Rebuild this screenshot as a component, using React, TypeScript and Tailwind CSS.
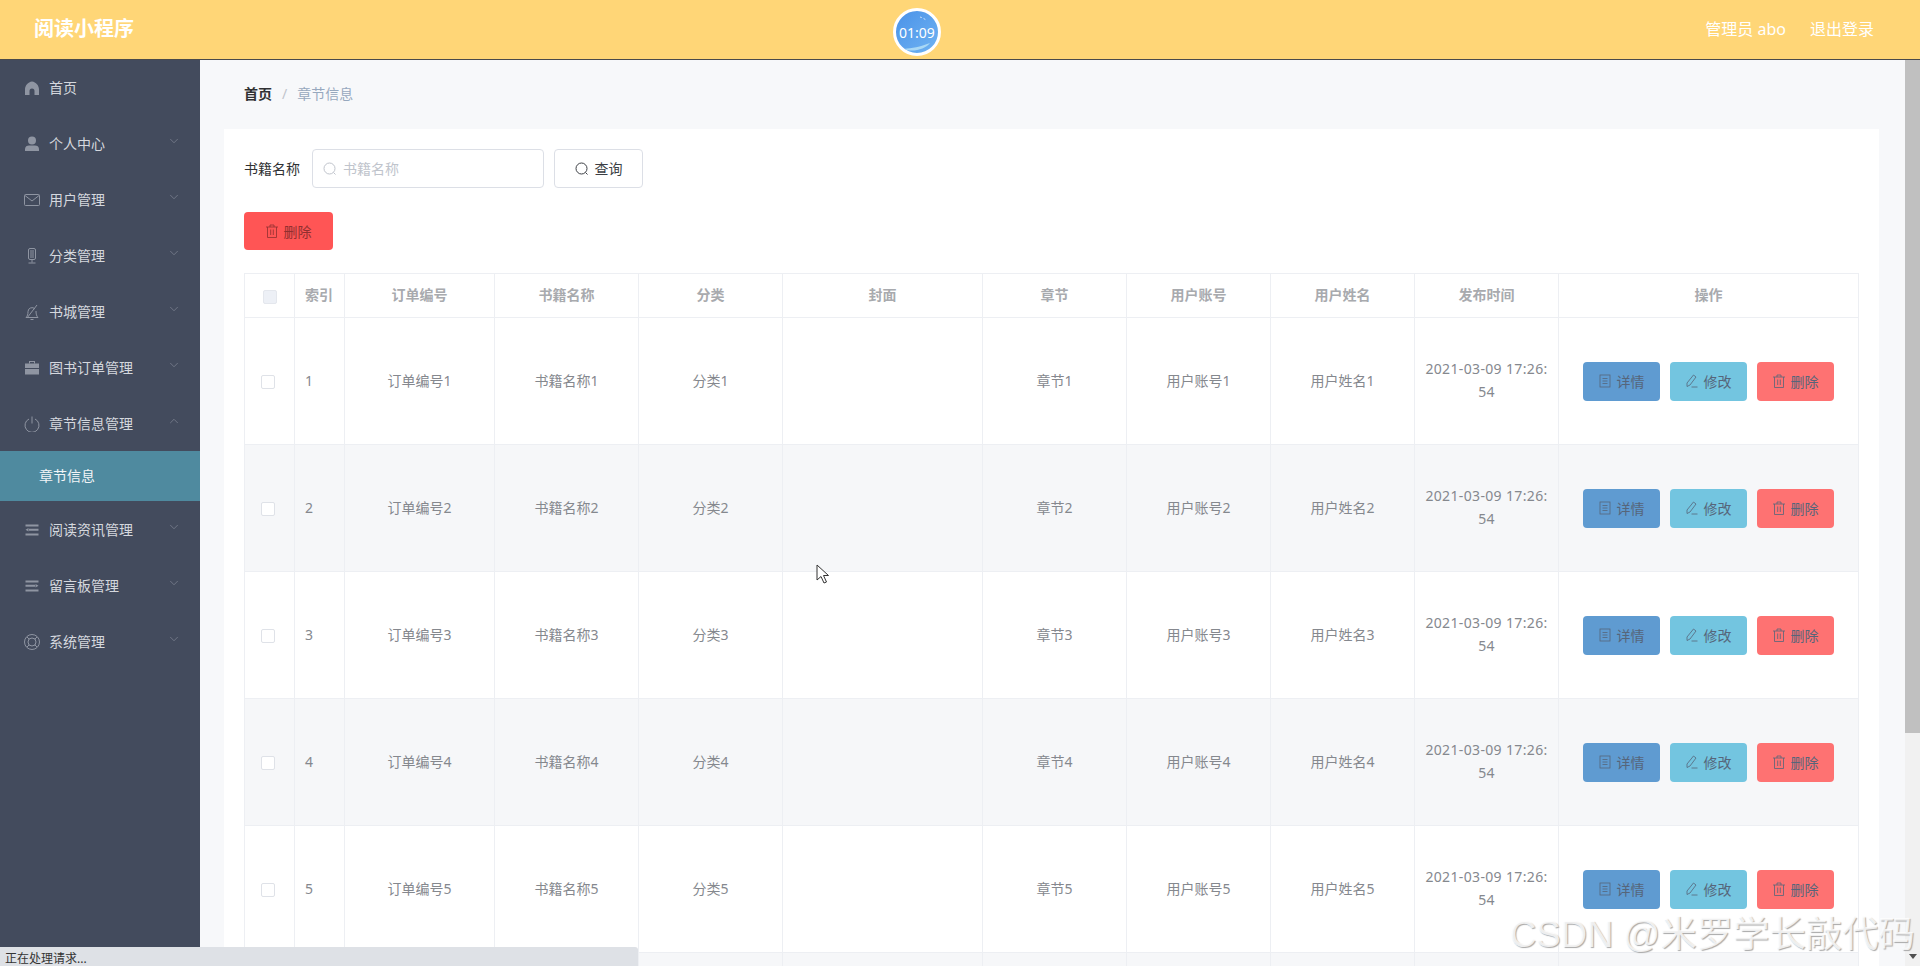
import React from "react";
import { ChevronDown, ChevronUp } from "lucide-react";

const FONT = '"Noto Sans", "Noto Sans CJK SC", sans-serif';

const HomeIcon = () => (
  <svg width="16" height="16" viewBox="0 0 16 16" fill="currentColor">
    <path d="M8 1.5C4 2 1 5.5 1 9.5V15h4.5v-4a2.5 2.5 0 0 1 5 0v4H15V9.5C15 5.500 12 2 8 1.500Z" />
  </svg>
);
const UserIcon = () => (
  <svg width="16" height="16" viewBox="0 0 16 16" fill="currentColor">
    <circle cx="8" cy="4.500" r="4" />
    <path d="M1 15v-2c0-2.500 2-3.500 4-3.500h6c2 0 4 1 4 3.500v2Z" />
  </svg>
);
const MailIcon = () => (
  <svg width="16" height="16" viewBox="0 0 16 16" fill="none" stroke="currentColor" strokeWidth="1">
    <rect x="0.500" y="2.500" width="15" height="11" rx="1" />
    <path d="M1 3.500 8 9l7-5.500" />
  </svg>
);
const MicIcon = () => (
  <svg width="16" height="16" viewBox="0 0 16 16" fill="none" stroke="currentColor" strokeWidth="1">
    <rect x="4.500" y="0.500" width="7" height="11" rx="1.500" />
    <path d="M6 3h4M6 5h4M6 7h4M6 9h4M8 11.500v3M4.500 15h7" />
  </svg>
);
const BellOffIcon = () => (
  <svg width="16" height="16" viewBox="0 0 16 16" fill="none" stroke="currentColor" strokeWidth="1">
    <path d="M2 13.500c1.500-1.500 2-3 2-6a4 4 0 0 1 7-2.500M12 7c0 3 .5 5 2 6.500H2M6.500 15.500h3M13 1 3 14" />
  </svg>
);
const CaseIcon = () => (
  <svg width="16" height="16" viewBox="0 0 16 16" fill="currentColor">
    <path d="M5 3.500V1h6v2.500h-1V2H6v1.500Z" />
    <path d="M1 3.500h14V8H1ZM1 9h14v5.500H1Z" />
  </svg>
);
const PowerIcon = () => (
  <svg width="16" height="16" viewBox="0 0 16 16" fill="none" stroke="currentColor" strokeWidth="1">
    <path d="M5 3a7 7 0 1 0 6 0M8 .5v7" />
  </svg>
);
const FoldIcon = () => (
  <svg width="16" height="16" viewBox="0 0 16 16" fill="currentColor">
    <path d="M1.500 2.500h13V4.500h-13ZM5 6.800h9.500v2H5ZM1.500 11.500h13v2h-13ZM1.500 7.800 4.500 6v3.500Z" />
  </svg>
);
const UnfoldIcon = () => (
  <svg width="16" height="16" viewBox="0 0 16 16" fill="currentColor">
    <path d="M1.500 2.500h13V4.500h-13ZM1.500 6.800H11v2H1.500ZM1.500 11.500h13v2h-13ZM14.500 7.800 11.500 6v3.500Z" />
  </svg>
);
const HelpIcon = () => (
  <svg width="16" height="16" viewBox="0 0 16 16" fill="none" stroke="currentColor" strokeWidth="1">
    <circle cx="8" cy="8" r="7.500" />
    <circle cx="8" cy="8" r="4" />
    <path d="M3 3l2.200 2.200M13 3l-2.200 2.200M3 13l2.200-2.200M13 13l-2.200-2.200" />
  </svg>
);
const SearchIcon = () => (
  <svg width="14" height="14" viewBox="0 0 14 14" fill="none" stroke="currentColor" strokeWidth="1">
    <circle cx="6.500" cy="6.500" r="5.500" />
    <path d="m10.500 10.500 2 2" />
  </svg>
);
const TrashIcon = () => (
  <svg width="12" height="14" viewBox="0 0 12 14" fill="none" stroke="currentColor" strokeWidth="0.8">
    <path d="M0 3h12M4 3V1h4v2M1.500 3v10.500h9V3M4.700 5.500v5.500M7.300 5.500v5.500" />
  </svg>
);
const EditIcon = () => (
  <svg width="12" height="14" viewBox="0 0 12 14" fill="none" stroke="currentColor" strokeWidth="0.8">
    <path d="M7.500 1 10 3 4 11l-3 1.500L1 9ZM5.500 13h6" />
  </svg>
);
const DocIcon = () => (
  <svg width="12" height="14" viewBox="0 0 12 14" fill="none" stroke="currentColor" strokeWidth="0.8">
    <rect x="1" y="1" width="10" height="12" />
    <path d="M3.500 4.500h5M3.500 7h5M3.500 9.500h5" />
  </svg>
);

const menus = [
  { label: "首页", icon: <HomeIcon />, arrow: false },
  { label: "个人中心", icon: <UserIcon />, arrow: true },
  { label: "用户管理", icon: <MailIcon />, arrow: true },
  { label: "分类管理", icon: <MicIcon />, arrow: true },
  { label: "书城管理", icon: <BellOffIcon />, arrow: true },
  { label: "图书订单管理", icon: <CaseIcon />, arrow: true },
  { label: "章节信息管理", icon: <PowerIcon />, arrow: true, open: true },
  { label: "阅读资讯管理", icon: <FoldIcon />, arrow: true },
  { label: "留言板管理", icon: <UnfoldIcon />, arrow: true },
  { label: "系统管理", icon: <HelpIcon />, arrow: true },
];

const columns = [
  { label: "索引", width: "w-[50px]", align: "text-left" },
  { label: "订单编号", width: "w-[150px]", align: "text-center" },
  { label: "书籍名称", width: "w-[144px]", align: "text-center" },
  { label: "分类", width: "w-[144px]", align: "text-center" },
  { label: "封面", width: "w-[200px]", align: "text-center" },
  { label: "章节", width: "w-[144px]", align: "text-center" },
  { label: "用户账号", width: "w-[144px]", align: "text-center" },
  { label: "用户姓名", width: "w-[144px]", align: "text-center" },
  { label: "发布时间", width: "w-[144px]", align: "text-center" },
  { label: "操作", width: "w-[300px]", align: "text-center" },
];

const rows = [1, 2, 3, 4, 5];
const cell = "border border-[#edeff3] pb-[2px] text-center";

const Sidebar = () => (
  <aside className="w-[200px] shrink-0 bg-[#434b5d] text-[14px]">
    {menus.map((menu) => (
      <div key={menu.label}>
        <div className="h-14 flex items-center pl-[24px] pr-[19px] text-[#d5d8de]">
          <span className="w-[16px] mr-[9px] text-[#8f95a2] flex justify-center">{menu.icon}</span>
          <span className="flex-1 pb-[2px]">{menu.label}</span>
          {menu.arrow &&
            (menu.open ? (
              <ChevronUp size={14} strokeWidth={1} className="text-[#8f95a2] mb-[6px]" />
            ) : (
              <ChevronDown size={14} strokeWidth={1} className="text-[#8f95a2] mb-[6px]" />
            ))}
        </div>
        {menu.open && (
          <div className="-mt-px mb-px h-[50px] flex items-center pl-[39px] pb-[2px] bg-[#4f8a9f] text-[#f2f5f7]">章节信息</div>
        )}
      </div>
    ))}
  </aside>
);

const RowButton = ({ bg, icon, text }: { bg: string; icon: React.ReactNode; text: string }) => (
  <button className={`${bg} w-[77px] h-[39px] rounded-[4px] flex items-center justify-center gap-[6px] text-[14px] text-[#56657a]`}>
    {icon}
    {text}
  </button>
);

const Table = () => (
  <table className="table-fixed w-[1614px] border-collapse border border-[#edeff3] text-[14px] text-[#85888e]">
    <thead>
      <tr className="h-[44px]">
        <th className="w-[50px] border border-[#edeff3] text-center align-middle">
          <span className="inline-block w-[14px] h-[14px] rounded-[2px] border border-[#e4e7ed] bg-[#edf0f6] align-middle" />
        </th>
        {columns.map((col) => (
          <th
            key={col.label}
            className={`${col.width} ${col.align} border border-[#edeff3] px-[10px] pb-[2px] font-bold text-[#a8aaae]`}
          >
            {col.label}
          </th>
        ))}
      </tr>
    </thead>
    <tbody>
      {rows.map((n) => (
        <tr key={n} className={n % 2 === 0 ? "h-[127px] bg-[#f6f7f9]" : "h-[127px] bg-white"}>
          <td className="border border-[#edeff3] pr-[4px] pb-[2px] text-center">
            <span className="inline-block w-[14px] h-[14px] rounded-[2px] border border-[#dfe2e8] bg-white align-middle" />
          </td>
          <td className="border border-[#edeff3] px-[10px] pb-[2px]">{n}</td>
          <td className={cell}>订单编号{n}</td>
          <td className={cell}>书籍名称{n}</td>
          <td className={cell}>分类{n}</td>
          <td className="border border-[#edeff3]" />
          <td className={cell}>章节{n}</td>
          <td className={cell}>用户账号{n}</td>
          <td className={cell}>用户姓名{n}</td>
          <td className={`${cell} leading-[23px] tracking-[0.35px]`}>
            2021-03-09 17:26:
            <br />
            54
          </td>
          <td className="border border-[#edeff3]">
            <div className="flex justify-center gap-[10px]">
              <RowButton bg="bg-[#5f9bd1]" icon={<DocIcon />} text="详情" />
              <RowButton bg="bg-[#73c5e0]" icon={<EditIcon />} text="修改" />
              <RowButton bg="bg-[#fe7272]" icon={<TrashIcon />} text="删除" />
            </div>
          </td>
        </tr>
      ))}
      {/* sixth row only peeks in at the bottom of the page */}
      <tr className="h-[127px] bg-[#f6f7f9]">
        <td className="border border-[#edeff3]" />
        {columns.map((col) => (
          <td key={col.label} className="border border-[#edeff3]" />
        ))}
      </tr>
    </tbody>
  </table>
);

const Scrollbar = () => (
  <div className="w-[15px] shrink-0 bg-[#f1f1f1] flex flex-col">
    <div className="h-[673px] bg-[#c0c0c0]" />
    <div className="flex-1" />
    <div className="h-[17px] flex justify-center pt-[5px]">
      <span className="w-0 h-0 border-l-[4px] border-r-[4px] border-t-[5px] border-l-transparent border-r-transparent border-t-[#505050]" />
    </div>
  </div>
);

export default function App() {
  return (
    <div className="relative h-[966px] overflow-hidden flex flex-col bg-[#f7f8fa]" style={{ fontFamily: FONT }}>
      <header className="h-[60px] shrink-0 bg-[#ffd677] border-b border-[#4a4a4a] flex items-center justify-between pl-[34px] pr-[46px] text-white">
        <span className="text-[20px] font-bold pb-[2px]">阅读小程序</span>
        <div className="flex gap-6 text-[16px] pb-[2px]">
          <span>管理员 abo</span>
          <span>退出登录</span>
        </div>
      </header>

      <div className="flex-1 flex min-h-0">
        <Sidebar />
        <main className="flex-1 min-w-0 overflow-hidden pl-[24px] pr-[26px]">
          <div className="h-[69px] pl-[20px] pt-[23px] text-[14px] leading-[22px]">
            <span className="font-bold text-[#303133]">首页</span>
            <span className="mx-[10px] text-[#c0c4cc]">/</span>
            <span className="text-[#97a8be]">章节信息</span>
          </div>
          <div className="bg-white px-[20px] pt-[20px]">
            <div className="flex items-center text-[14px]">
              <span className="w-[68px] text-[#303133]">书籍名称</span>
              <div className="w-[232px] h-[39px] rounded-[4px] border border-[#dcdfe6] flex items-center pl-[10px] gap-[6px] text-[#c0c4cc]">
                <SearchIcon />
                书籍名称
              </div>
              <button className="ml-[10px] w-[89px] h-[39px] rounded-[4px] border border-[#dcdfe6] flex items-center justify-center gap-[6px] text-[#3c3f45]">
                <SearchIcon />
                查询
              </button>
            </div>
            <button className="mt-[24px] w-[89px] h-[38px] rounded-[4px] bg-[#ff5555] flex items-center justify-center gap-[6px] text-[14px] text-[#8f3030]">
              <TrashIcon />
              删除
            </button>
            <div className="mt-[23px]">
              <Table />
            </div>
          </div>
        </main>
        <Scrollbar />
      </div>

      {/* timer floating over the header */}
      <div className="absolute left-[893px] top-[8px] w-[48px] h-[48px] rounded-full border-[3px] border-white overflow-hidden bg-gradient-to-br from-[#4a92e8] to-[#6fb3f2] flex items-center justify-center text-[14px] text-white">
        <svg className="absolute inset-0" width="42" height="42" viewBox="0 0 42 42" fill="none">
          <path d="M24 6c2 .5 4 1.500 6 3" stroke="#fff" strokeOpacity="0.7" strokeWidth="1" strokeDasharray="2 2" />
          <path d="M8 38c8-1 16-2 26-6-4 6-18 10-26 6Z" fill="#a9d8f5" />
        </svg>
        <span className="relative">01:09</span>
      </div>

      {/* mouse pointer in the recording */}
      <svg className="absolute left-[816px] top-[564px]" width="15" height="20" viewBox="0 0 15 20">
        <path d="M1 1v15l4-3.500 3 6.500 2.500-1-3-6.500h5Z" fill="#fff" stroke="#333" strokeWidth="1" />
      </svg>

      {/* browser status bubble */}
      <div className="absolute left-0 bottom-0 w-[638px] h-[19px] bg-[#dee1e6] rounded-tr-[3px] pl-[5px] pt-[2px] text-[12px] leading-[20px] text-[#333]">
        正在处理请求...
      </div>

      {/* watermark */}
      <div
        className="absolute right-[5px] top-[913px] text-[36.4px] leading-[44px] whitespace-nowrap text-white/80 [text-shadow:1px_1px_1px_#a8a8a8]"
        style={{ fontFamily: '"Liberation Sans", "Noto Sans CJK SC", sans-serif' }}
      >
        CSDN @米罗学长敲代码
      </div>
    </div>
  );
}
